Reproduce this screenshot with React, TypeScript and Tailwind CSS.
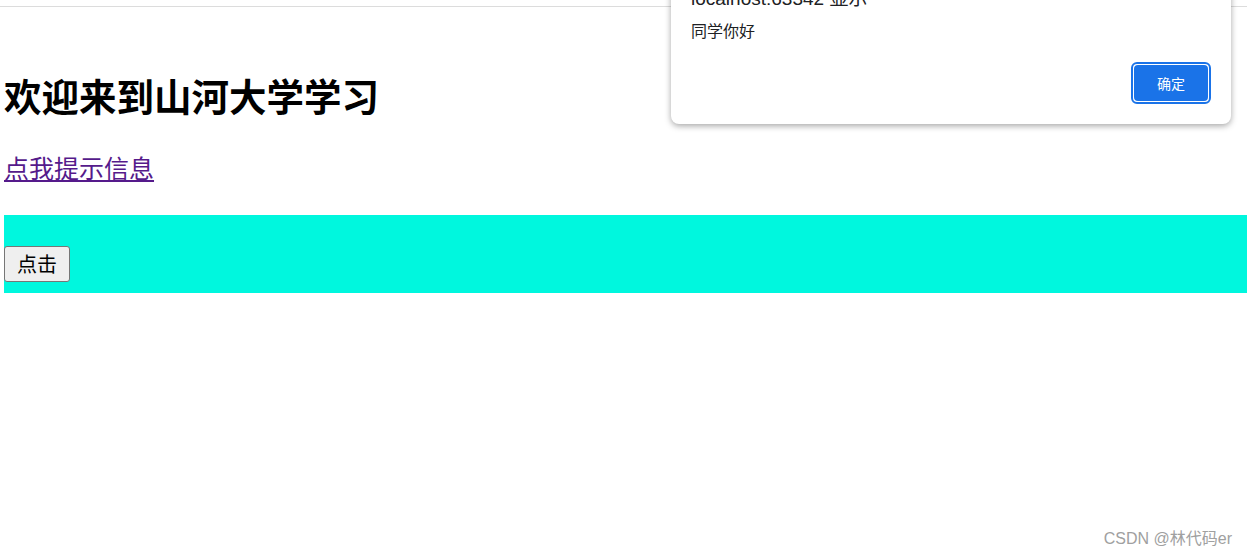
import React from "react";

export default function App() {
  const font = { fontFamily: '"Noto Sans CJK SC", "Liberation Sans", sans-serif' };
  return (
    <div className="relative h-[557px] w-full overflow-hidden bg-white text-black" style={font}>
      <div className="mt-[6px] h-px bg-[#dcdcdc]" />
      <div className="pl-[4px]">
        <h1 className="mt-[69px] text-[37.5px] leading-[37px] font-bold">欢迎来到山河大学学习</h1>
        <a href="#" className="mt-[42px] block w-max text-[25px] leading-[25px] text-[#551a8b] underline">
          点我提示信息
        </a>
        <div className="mt-[35px] h-[78px] bg-[#00f7de] pt-[31px]">
          <button className="h-[36px] w-[66px] rounded-[3px] border border-[#767676] bg-[#efefef] text-[20px] leading-[20px] text-black">
            点击
          </button>
        </div>
      </div>

      <div className="absolute left-[671px] top-[-35px] flex w-[560px] flex-col rounded-[8px] bg-white px-[20px] pb-[20px] pt-[22px] shadow-[0_2px_6px_rgba(0,0,0,0.35)]">
        <div className="h-[24px] text-[19px] leading-[24px] text-[#202124]" style={{ fontFamily: '"Liberation Sans", "Noto Sans CJK SC", sans-serif' }}>
          localhost:63342 显示
        </div>
        <div className="mt-[9px] text-[16px] leading-[20px] text-[#202124]">同学你好</div>
        <div className="mt-[22px] flex justify-end">
          <div className="h-[42px] w-[80px] rounded-[6px] border-2 border-[#1a73e8] bg-white p-px">
            <button className="h-full w-full rounded-[4px] bg-[#1a73e8] text-[14px] leading-[14px] text-white">确定</button>
          </div>
        </div>
      </div>

      <div className="absolute bottom-[7px] right-[15px] text-[16px] leading-[22px] text-[#a0a0a0]" style={{ fontFamily: '"Liberation Sans", "Noto Sans CJK SC", sans-serif' }}>
        CSDN @林代码er
      </div>
    </div>
  );
}
